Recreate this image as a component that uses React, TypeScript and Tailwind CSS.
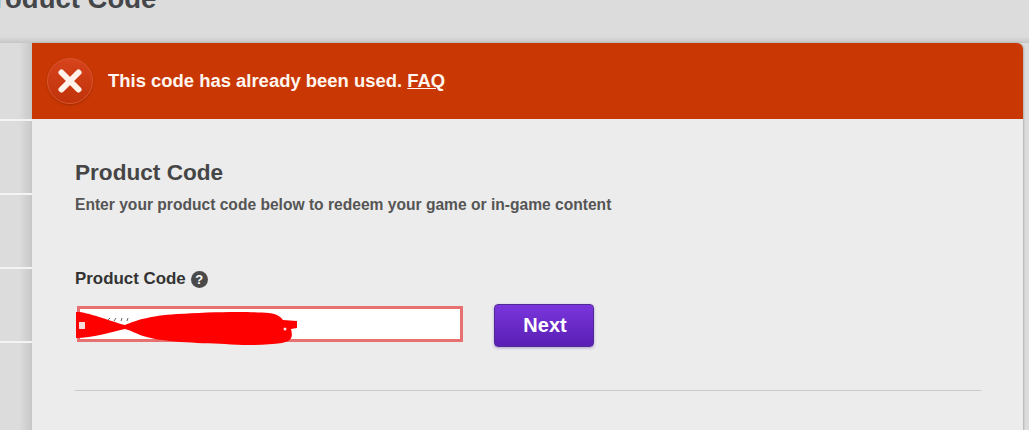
import React from "react";

const font = { fontFamily: '"Liberation Sans", Arial, sans-serif' };

export default function App() {
  return (
    <div className="w-[1029px] h-[430px] overflow-hidden bg-[#dcdcdc] flex flex-col" style={font}>
      <div className="h-[43px] shrink-0 overflow-hidden bg-gradient-to-b from-[#dcdcdc] from-85% to-[#c6c6c6]">
        <div className="-mt-[19px] -ml-[24px] text-[27.5px] leading-[36px] font-bold text-[#44464a]">Product Code</div>
      </div>
      <div className="flex flex-1 min-h-0 pr-[6px]">
        <div className="w-[32px] shrink-0 flex flex-col bg-gradient-to-r from-[#dcdcdc] from-60% to-[#c8c8c8]">
          <div className="h-[78px] shrink-0 border-b-2 border-[#f4f4f4]" />
          <div className="h-[74px] shrink-0 border-b-2 border-[#f4f4f4]" />
          <div className="h-[74px] shrink-0 border-b-2 border-[#f4f4f4]" />
          <div className="h-[74px] shrink-0 border-b-2 border-[#f4f4f4]" />
          <div className="flex-1" />
        </div>
        <div className="flex-1 bg-[#ececec] rounded-tr-[6px] overflow-hidden flex flex-col shadow-[1px_0_2px_rgba(0,0,0,0.2)]">
          <div className="h-[76px] shrink-0 bg-[#c93804] flex items-center pl-[15px] gap-[15px]">
            <div className="w-[46px] h-[46px] rounded-full bg-gradient-to-b from-[#d6431c] to-[#c0330a] border border-[#d9552e] flex items-center justify-center shadow-[0_1px_2px_rgba(120,30,0,0.5)]">
              <svg width="26" height="26" viewBox="0 0 26 26">
                <path d="M4.5 4.5 L21.5 21.5 M21.5 4.5 L4.5 21.5" stroke="#fff3ec" strokeWidth="6" strokeLinecap="round" />
              </svg>
            </div>
            <div className="text-[18.45px] font-bold text-[#fff6ef] leading-none">
              This code has already been used. <a className="underline">FAQ</a>
            </div>
          </div>
          <div className="pl-[43px] pr-[42px] pt-[41px]">
            <h1 className="text-[22.6px] leading-[26px] font-bold text-[#454545]">Product Code</h1>
            <p className="mt-[9px] text-[15.6px] leading-[20px] font-bold text-[#555555]">
              Enter your product code below to redeem your game or in-game content
            </p>
            <div className="mt-[54px] flex items-center gap-[5px]">
              <span className="text-[16.9px] leading-[20px] font-bold text-[#333333]">Product Code</span>
              <span className="w-[17px] h-[17px] rounded-full bg-[#4a4a4a] text-white text-[13px] leading-[17px] font-bold text-center">?</span>
            </div>
            <div className="mt-[15px] flex items-start gap-[31px] pl-[2px]">
              <div className="relative mt-[2px] w-[386px] h-[36px] bg-white border-[3px] border-[#e77070]">
                <svg className="absolute -left-[3px] -top-[3px] overflow-visible" width="225" height="42" viewBox="0 0 225 42">
                  <path d="M30 15 L33 12 M37 15 L39 12 M44 15 L45 12 M50 15 L51 12" stroke="#666" strokeWidth="1" />
                  <path
                    d="M-1 6 C8 5 30 14 48 19 C60 14 72 10 100 8 C130 6 170 5 192 7 C200 8 204 11 206 14 L220 15 L220 22 L214 23 C216 31 215 35 205 37 C190 39 170 40 148 38 C120 37 85 36 66 30 C58 27 52 24 48 23 C34 26 15 32 -1 32 Z"
                    fill="#fe0000"
                  />
                  <rect x="2" y="16" width="6" height="7" fill="#f6dcdc" />
                  <circle cx="208" cy="23" r="1.5" fill="#ffe5e5" />
                </svg>
              </div>
              <button className="w-[100px] h-[43px] rounded-[4px] bg-gradient-to-b from-[#7a35dc] to-[#5a1fb4] border border-[#4f2a96] text-white text-[20px] font-bold pl-[2px] pb-[2px] shadow-[0_1px_3px_rgba(90,40,170,0.4)]">
                Next
              </button>
            </div>
            <div className="mt-[43px] h-px bg-[#c9c9c9]" />
          </div>
        </div>
      </div>
    </div>
  );
}
